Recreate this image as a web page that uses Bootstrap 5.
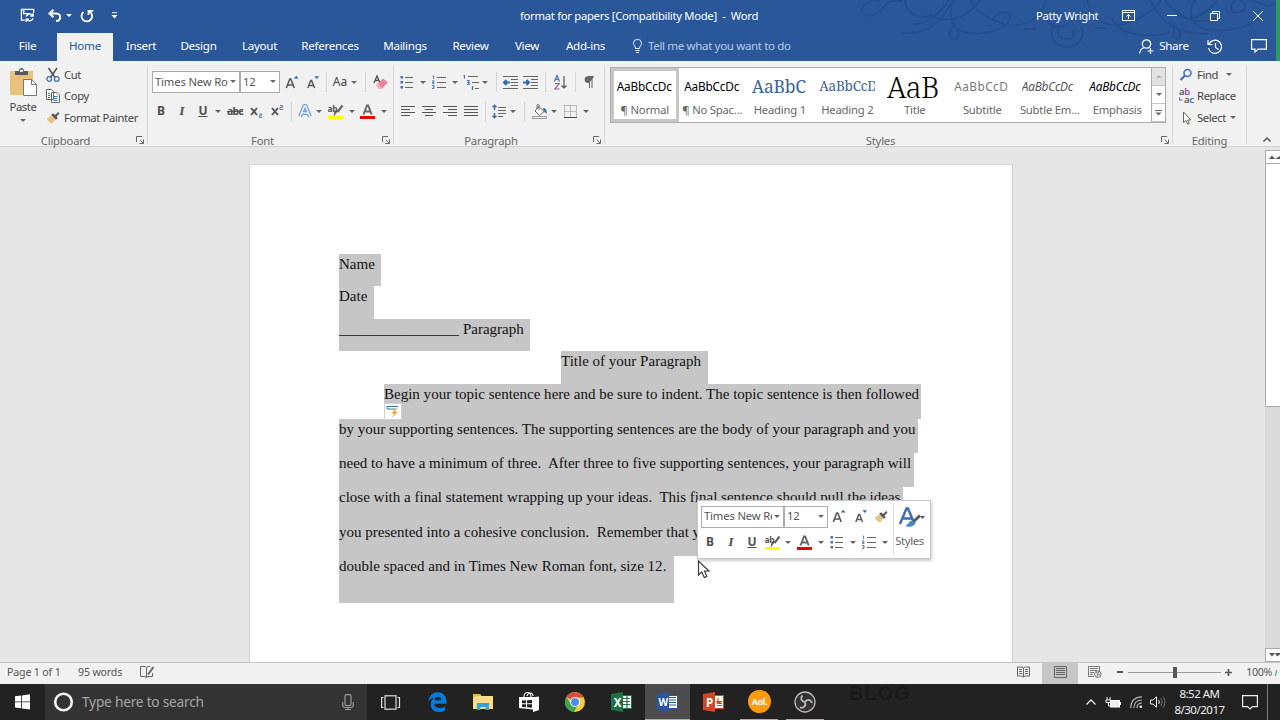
<!DOCTYPE html>
<html lang="en">
<head>
<meta charset="utf-8">
<title>format for papers [Compatibility Mode] - Word</title>
<meta name="viewport" content="width=device-width, initial-scale=1">
<link href="https://cdn.jsdelivr.net/npm/bootstrap@5.3.0/dist/css/bootstrap.min.css" rel="stylesheet">
<style>
:root{--wd-blue:#2a579a;--wd-gray:#f1f1f1;--wd-text:#444}
body{font-family:"Noto Sans","Open Sans",sans-serif;font-size:11.25px;letter-spacing:-.36px;line-height:16px;color:var(--wd-text);overflow:hidden;background:#e6e6e6}
svg{display:block;flex:none;overflow:visible}
.app{width:1280px;height:720px}
.head{height:61px;background:var(--wd-blue);border-right:4px solid #2b9e5f;color:#fff}
.swirl{left:850px;top:0}
.strip{display:grid;align-items:center;justify-items:center;white-space:nowrap}
.strip>.l{justify-self:start}
.title-row{height:31px;grid-template-columns:20px 15px 12px 15px 14px 21px 34px 389px 516px 71px 43px 44px 42px 44px;letter-spacing:-.28px}
.tab-row{height:30px;grid-template-columns:55px 2px 56px 56px 59px 63px 78px 72px 59px 54px 63px 13px 14px 4px 488px 21px 34px 41px 44px;font-size:11.6px;letter-spacing:-.28px}
.tab-row .on{background:var(--wd-gray);color:var(--wd-blue);height:28px;align-self:end;width:56px;text-align:center;padding-top:5px}
.tell{color:#b8cae6;letter-spacing:-.38px}
.ribbon{height:87px;background:var(--wd-gray);border-bottom:1px solid #d2d2d2}
.grp{border-right:1px solid #d8d8d8;margin-top:4px;height:79px}
.grp-clip{width:148px}.grp-font{width:246px}.grp-para{width:211px}.grp-style{width:568px}.grp-edit{width:74px}
.grp-name{height:15px;color:#666;margin-bottom:-4px;letter-spacing:-.2px}
.launch{right:3px;bottom:0}
.caret{width:0;height:0;border:3px solid transparent;border-top:3px solid #666;border-bottom:0}
.caret.light{border-top-color:#fff}
.caret.up{transform:rotate(180deg);opacity:.35}
.bar{width:1px;height:20px;background:#d5d5d5}
.combo{background:#fff;border:1px solid #ababab;height:22px;width:100%;display:flex;align-items:center;justify-content:space-between;padding:0 3px 1px 2px;letter-spacing:-.15px;color:#555}
.font1{height:34px;grid-template-columns:4px 88px 40px 24px 18px 8px 20px 8px 14px 16px}
.font2{height:24px;margin-left:3px;grid-template-columns:20px 22px 20px 10px 24px 18px 24px 4px 24px 4px 30px 2px 30px 2px}
.para1{height:34px;margin-left:3px;grid-template-columns:20px 12px 20px 12px 20px 8px 14px 14px 27px 2px 28px 2px 26px}
.para2{height:24px;margin-left:3px;grid-template-columns:21px 22px 20px 22px 6px 22px 6px 17px 13px 16px 16px 16px}
.b-ic{font-weight:700;font-size:12px;letter-spacing:0;color:#505050}
.b-it{font-family:"Liberation Serif",serif;font-size:13.5px;font-style:italic}
.b-st{font-size:10.5px;letter-spacing:-.8px;text-decoration:line-through}
.aa{font-size:12px;letter-spacing:0}
.paste{width:46px;padding-top:3px}
.paste span{margin-top:3px}
.clip-list{margin-top:-1px}
.clip-list>div,.edit-list>div{height:21.5px}
.gallery{margin:2px 0 0 5px;width:556px;height:56px;background:#fff;border:1px solid #ababab}
.sty{width:67.5px;height:54px;text-align:center;color:#666;padding:3px;letter-spacing:-.2px}
.sty.on{border:3px solid #c6c6c6;padding:0}
.sty .pv{width:56px;height:31px;margin:0 auto;overflow:hidden;white-space:nowrap;color:#000;display:flex;align-items:center;line-height:31px;font-size:11.8px}
.sty .nm{margin-top:0}
.sty .pv.h1s,.sty .pv.h2s{color:#3c6399;font-family:"Noto Serif","DejaVu Serif",serif;font-size:17.5px}
.sty .pv.h2s{font-size:13.5px}
.sty .pv.ts{font-family:"Noto Serif","DejaVu Serif",serif;font-weight:300;font-size:29px;letter-spacing:-.6px;align-items:flex-start;line-height:20px;height:25px;margin:6px auto 0}
.sty .pv.ss{color:#777;letter-spacing:.45px}
.sty .pv.se{color:#555;font-style:italic}
.sty .pv.em{font-style:italic}
.gal-sc{width:14px}
.gal-sc div{height:18px;border-left:1px solid #ababab;border-bottom:1px solid #c6c6c6;display:flex;align-items:center;justify-content:center}
.gal-sc .off{background:#e1e1e1}
.edit-list{margin:-1px 0 0 6px}
.edit-list span{margin-left:3px}
.collapse-ic{margin:0 -6px 1px 0}
.work{height:515px}
.page{width:764px;height:498px;margin:17px 0 0 249px;background:#fff;border:1px solid #d0d0d0;border-bottom:0;border-top-color:#d6d6d6;padding:89px 0 0 89px;font-family:"Liberation Serif",serif;font-size:15.02px;letter-spacing:0;color:#111;line-height:20px;white-space:pre}
.sel{background:#c6c6c6;display:block}
.scroller{width:15px;margin-top:3px}
.scroller .btn-b{height:14px;background:#fff;border:1px solid #ababab;border-right:0}
.scroller .thumb{height:243px;background:#fff;border:1px solid #ababab;border-right:0;border-top:0}
.scroller .trk{flex:1;background:#dadada}
.mini{left:697px;top:500px;width:234px;height:59px;background:#fff;border:1px solid #c6c6c6;box-shadow:1px 2px 3px #0003}
.mini1{height:31px;grid-template-columns:3px 83px 44px 22px 22px 17px}
.mini1 .fname{width:68px;overflow:hidden}
.mini2{height:20px;grid-template-columns:2px 20px 22px 20px 22px 8px 26px 5px 27px 5px 27px 5px}
.mini-s{left:195px;top:2px;width:34px;height:52px;border-left:1px solid #ddd}
.mini-s svg{margin:3px 0 0 2px}
.mini-s span{margin:3px 2px 0 0;color:#666}
.tag{left:384px;top:403px;width:18px;height:17px;background:#fff;border:1px solid #d0d0d0}
.ptr{left:697px;top:560px}
.status{height:22px;background:var(--wd-gray);border-top:1px solid #c6c6c6;grid-template-columns:7px 71px 62px 15px 849px 38px 36px 34px 16px 93px 14px 45px;letter-spacing:-.15px;font-size:10.6px;color:#555}
.status>span,.status>svg{margin-top:-3px}
.status .on{background:#c6c6c6;width:36px;height:21px;display:flex;align-items:center;justify-content:center;padding-bottom:3px}
.zoom-pc{padding-left:8px;letter-spacing:-.3px}
.zoom-pc i{color:#2b9e5f}
.task{height:36px;background:#222;color:#eee}
.start{width:45px}
.find-box{width:322px;background:#333;color:#a6a6a6;font-size:13.7px;letter-spacing:-.22px}
.find-box span{margin-left:9px}
.find-box .mic{margin:0 13px 0 auto}
.apps{grid-template-columns:46px 46px 46px 46px 46px 46px 46px 46px 46px 46px;height:36px;margin-left:1px}
.apps>div{height:36px;width:45px;display:flex;align-items:center;justify-content:center}
.apps .act{background:#4c4c4c}
.apps .run{border-bottom:1px solid #d99aa3}
.apps .nrw{width:38px}
.ghost{left:849px;top:681px;height:19px;padding-top:3px;overflow:hidden;color:#1a1a1a;font:700 20px/19px "Liberation Sans",sans-serif;letter-spacing:1px;clip-path:inset(3px 0 0 0)}
.tray{grid-template-columns:22px 22px 24px 19px 65px 35px 15px;height:36px;font-size:11.5px;letter-spacing:-.5px;line-height:16px;margin-right:-2px}
.tray .edge-ln{width:1px;height:36px;background:#777;justify-self:start}
</style>
</head>
<body>
<svg width="0" height="0" class="position-absolute">
<defs>
<symbol id="bul" viewBox="0 0 14 14"><path d="M5 2.500h8M5 7.500h8M5 12.500h8" stroke="#666"/><path d="M.5 1h2.500v2.500h-2.500zM.5 6h2.500v2.500h-2.500zM.5 11h2.500v2.500h-2.500z" fill="#4472b4"/></symbol>
<symbol id="num" viewBox="0 0 14 14"><path d="M5 2.500h9M5 7.500h9M5 12.500h9" stroke="#666"/><path d="M.6 1h1v3M0 5.900h2v1.400H.6v1.300h1.800M0 10.500h2v3H0M.8 12h1" fill="none" stroke="#4472b4" stroke-width=".9"/></symbol>
<symbol id="grow" viewBox="0 0 14 15"><path d="M1.300 13 4.800 4h1L9.300 13M2.700 10h5.200" fill="none" stroke="#5a5a5a" stroke-width="1.600"/><path d="M8.800 3.500 11.200.8l2.300 2.700z" fill="#2a6ab0"/></symbol>
<symbol id="shrink" viewBox="0 0 14 15"><path d="M1.800 13 4.800 5.500h.8L8.600 13M3 10.500h4.500" fill="none" stroke="#5a5a5a" stroke-width="1.500"/><path d="M8.500 1.200h4.600L10.800 4z" fill="#2a6ab0"/></symbol>
<symbol id="hilite" viewBox="0 0 16 15"><rect y="12" width="15" height="3" fill="#ff0"/><path d="M14.500 1.500 9.500 8" stroke="#666" stroke-width="2.200"/><path d="M9.500 7 6 11.500l1.300-4.500z" fill="#555" stroke="#555" stroke-width=".8"/><text x="-.5" y="7.500" font-size="8.500" font-weight="700" fill="#555" letter-spacing="-.4">ab</text></symbol>
<symbol id="fcol" viewBox="0 0 16 15"><rect y="12" width="15" height="3" fill="#e80000"/><path d="M3.500 10.500 7 1.500h1.200l3.500 9M4.800 7.500h5.500" fill="none" stroke="#666" stroke-width="1.900"/></symbol>
<symbol id="brush" viewBox="0 0 14 14"><path d="m.5 8 5-3.500L9.500 9 6 13.500C4 13.200 1.500 11 .5 8z" fill="#e8c183"/><path d="m5 4 2-1.500 2.300 1.800L12.500 1 14 2.500l-3 3.300 1 2.200L10 9.500z" fill="#58595b"/></symbol>
<symbol id="launchi" viewBox="0 0 8 8"><path d="M.5 6V.5H6M4 4l3 3M7.500 3.500v4h-4" fill="none" stroke="#666"/></symbol>
</defs></svg>

<div class="app d-flex flex-column position-relative">
<header class="head position-relative">
<svg class="swirl position-absolute" width="426" height="61" viewBox="0 0 426 61" fill="none" stroke="#254e8e" stroke-width="1.800"><path d="M30 2c-6-4-18 1-18 8 0 8 14 7 20-1S42 0 52 1M55 0c0 12 14 22 28 14M52 33c28 2 40-12 52-34M62 24c12 2 26-8 38-25M104 0c-8 18 0 32 15 33 20 2 41-5 41-16 0-8-12-5-16 1M106 24c-6 2-9 14-2 15s5-9 0-13M82 15c18 12 40-2 48-15M120 0c8 14 18 18 34 24 16 5 36-2 42-24M196 15c0 10 10 15 20 10M203 27c-5 10 4 20 14 20s19-9 14-20M209 29c-3 7 2 10 8 10s9-4 5-8M237 0c4 22 24 30 44 22 14-6 24-12 30-22M245 28h12M174 29h12M262 18c4 16 38 22 58 14M300 0c10 20 22 34 58 34M315 0c8 12 30 28 52 18M330 15c12 10 28-4 38-15M326 27c-6 8 0 14 3 11s1-9-3-11M345 0c-9 14-2 28 14 30 18 2 46-3 50-15M385 0c-8 8-2 15 5 12s7-10 0-11M400 0c12 2 18 10 24 3"/></svg>
<div class="strip title-row position-relative">
<span></span>
<svg width="16" height="15" viewBox="0 0 17 16" fill="none" stroke="#fff" stroke-width="1.400"><path d="M5 13H1.500V1.500h13V5M4 1.500V6h6.500"/><path d="M6.500 9a4 4 0 0 1 7-1M14 5.500v3h-3M14 11a4 4 0 0 1-7 1M6.500 15v-3h3"/></svg>
<span></span>
<svg width="14" height="13" viewBox="0 0 14 13" fill="none" stroke="#fff" stroke-width="2"><path d="M5.500.8 1.500 4.500l4 3.700M2 4.500h6.500c5 0 5 7.500-.5 7.500"/></svg>
<i class="caret light"></i>
<svg width="14" height="14" viewBox="0 0 14 14" fill="none" stroke="#fff" stroke-width="1.800"><path d="M9.500 2.600A5.300 5.300 0 1 1 3.500 3M8.500 6V1.800h4.800" /></svg>
<svg width="7" height="7" viewBox="0 0 7 7"><path d="M1 .7h5" stroke="#fff"/><path d="M.5 3h6l-3 3.500z" fill="#fff"/></svg>
<span></span>
<span class="l">format for papers [Compatibility Mode] &nbsp;-&nbsp; Word</span>
<span class="l">Patty Wright</span>
<svg width="13" height="11" viewBox="0 0 13 11" fill="none" stroke="#fff"><path d="M.5.5h12v10H.5zM.5 2.500h12M6.500 9V4.500M4.500 6.500l2-2 2 2"/></svg>
<svg width="10" height="10" viewBox="0 0 10 10" stroke="#fff"><path d="M0 4.500h10"/></svg>
<svg width="10" height="10" viewBox="0 0 10 10" fill="none" stroke="#fff"><path d="M.5 2.500h7v7h-7zM2.500 2.500v-2h7v7h-2"/></svg>
<svg width="10" height="10" viewBox="0 0 10 10" stroke="#fff"><path d="m0 0 10 10M10 0 0 10"/></svg>
</div>
<nav class="strip tab-row position-relative">
<span>File</span><span></span><span class="on">Home</span><span>Insert</span><span>Design</span><span>Layout</span><span>References</span><span>Mailings</span><span>Review</span><span>View</span><span>Add-ins</span><span></span>
<svg width="9" height="14" viewBox="0 0 9 14" fill="none" stroke="#e8eef7"><path d="M2.500 9.500C2.500 7 .5 6.500.5 4.300a4 4 0 0 1 8 0C8.500 6.500 6.500 7 6.500 9.500zM2.500 11.500h4M3 13.500h3"/></svg>
<span></span><span class="l tell">Tell me what you want to do</span>
<svg width="15" height="15" viewBox="0 0 15 15" fill="none" stroke="#fff" stroke-width="1.200"><circle cx="7.500" cy="5" r="4.200"/><path d="M.6 14.500C1 11 3 9.300 5 8.700M9.500 8.500l1 .5M8.500 12h6M11.500 9v6"/></svg>
<span>Share</span>
<svg width="16" height="15" viewBox="0 0 16 15" fill="none" stroke="#fff" stroke-width="1.200" style="margin-left:6px"><path d="M2 5a6.600 6.600 0 1 1-.5 4M1 1v4.500h4.500M8.500 4v4.500l3 2"/></svg>
<svg width="16" height="14" viewBox="0 0 16 14" fill="none" stroke="#fff" stroke-width="1.200" style="margin-left:9px"><path d="M.6.600h14.800v9.500H7l-3 3v-3H.6z"/></svg>
</nav>
</header>

<section class="ribbon d-flex">
<div class="grp grp-clip position-relative d-flex flex-column justify-content-between">
<div class="d-flex">
<div class="paste d-flex flex-column align-items-center"><svg width="27" height="28" viewBox="0 0 27 28"><rect y="3" width="23" height="24" rx="1" fill="#e8c27a"/><path d="M5 3h4c0-4 5-4 5 0h4v4H5z" fill="#58595b"/><rect x="10" y="1.800" width="3" height="2" fill="#fff"/><path d="M13.500 11.500h8l5 5v11h-13z" fill="#fff" stroke="#777"/><path d="M21.500 11.500v5h5" fill="none" stroke="#777"/></svg><span>Paste</span><i class="caret mt-1"></i></div>
<div class="clip-list">
<div class="d-flex align-items-center"><svg width="14" height="14" viewBox="0 0 14 14" fill="none"><path d="M2.500 0 9 9.500M11 0 4.500 9.500" stroke="#555" stroke-width="1.500"/><circle cx="3.200" cy="11" r="2.300" stroke="#3f70ad" stroke-width="1.300"/><circle cx="10.700" cy="11" r="2.300" stroke="#3f70ad" stroke-width="1.300"/></svg><span class="ms-1">Cut</span></div>
<div class="d-flex align-items-center"><svg width="14" height="14" viewBox="0 0 14 14" fill="#fff" stroke="#666"><path d="M.5.5h5l2 2v8h-7zM5.500 3.500H11l2.500 2.500v7.500h-8z"/><path d="M2 4.500h2M2 6.500h2M2 8.500h2M7.500 7.500h4M7.500 9.500h4M7.500 11.500h4" stroke="#3f70ad"/></svg><span class="ms-1">Copy</span></div>
<div class="d-flex align-items-center"><svg width="14" height="13"><use href="#brush"/></svg><span class="ms-1">Format Painter</span></div>
</div></div>
<div class="grp-name text-center pe-3">Clipboard</div>
<svg class="launch position-absolute" width="8" height="8"><use href="#launchi"/></svg>
</div>

<div class="grp grp-font position-relative d-flex flex-column">
<div class="strip font1"><span></span><div class="combo"><span>Times New Ro</span><i class="caret"></i></div><div class="combo"><span>12</span><i class="caret"></i></div>
<svg width="14" height="15"><use href="#grow"/></svg><svg width="14" height="15"><use href="#shrink"/></svg><i class="bar"></i><span class="aa">Aa</span><i class="caret"></i><i class="bar"></i>
<svg width="15" height="15" viewBox="0 0 15 15"><path d="M1 8 4 1l3 7M2 5.500h4" fill="none" stroke="#555" stroke-width="1.400"/><path d="m3 10 7-6.500 5 4L8.500 14H6z" fill="#e8829a"/><path d="m3 10 2-2 4 5-1 1H6z" fill="#f3b3c1"/></svg></div>
<div class="strip font2"><span class="b-ic">B</span><span class="b-ic b-it">I</span><span class="b-ic text-decoration-underline">U</span><i class="caret"></i><span class="b-ic b-st">abc</span>
<svg width="13" height="13" viewBox="0 0 13 13"><path d="m1 3 6 7M7 3l-6 7" stroke="#555" stroke-width="1.900"/><path d="M9.500 9h2v1.500h-2V12.500H12" fill="none" stroke="#3f87c4"/></svg>
<svg width="13" height="13" viewBox="0 0 13 13"><path d="m1 3 6 7M7 3l-6 7" stroke="#555" stroke-width="1.900"/><path d="M9 .5h2.500V2.500H9V4.500h3" fill="none" stroke="#3f87c4"/></svg>
<i class="bar"></i>
<svg width="14" height="14" viewBox="0 0 14 14" fill="none"><path d="M2 12.500 6.500 2h1L12 12.500M4 9h6" stroke="#6f9fd6" stroke-width="4" stroke-linejoin="round"/><path d="M2 12.500 6.500 2h1L12 12.500M4 9h6" stroke="#eaf2fb" stroke-width="1.600"/></svg><i class="caret"></i>
<svg width="16" height="15"><use href="#hilite"/></svg><i class="caret"></i><svg width="16" height="15"><use href="#fcol"/></svg><i class="caret"></i></div>
<div class="grp-name text-center mt-auto pe-3">Font</div>
<svg class="launch position-absolute" width="8" height="8"><use href="#launchi"/></svg>
</div>

<div class="grp grp-para position-relative d-flex flex-column">
<div class="strip para1"><svg width="14" height="14"><use href="#bul"/></svg><i class="caret"></i><svg width="14" height="14"><use href="#num"/></svg><i class="caret"></i>
<svg width="17" height="15" viewBox="0 0 17 15"><path d="M5 1.500h10M9 7.500h7M12 13.500h4" stroke="#666"/><path d="M.5.500h1v3M4 5.500h2v2H4M4 9.500h2v-2M9.500 11v4" stroke="#4472b4" fill="none" stroke-width="1.200"/></svg><i class="caret"></i><i class="bar"></i>
<svg width="15" height="13" viewBox="0 0 15 13"><path d="M0 .5h15M8 3.500h7M8 6.500h7M8 9.500h7M0 12.500h15" stroke="#666"/><path d="M1 6.500h6M3.500 4 1 6.500 3.500 9" fill="none" stroke="#2f69b3" stroke-width="2"/></svg>
<svg width="15" height="13" viewBox="0 0 15 13"><path d="M0 .5h15M8 3.500h7M8 6.500h7M8 9.500h7M0 12.500h15" stroke="#666"/><path d="M0 6.500h6M3.500 4 6 6.500 3.500 9" fill="none" stroke="#2f69b3" stroke-width="2"/></svg>
<i class="bar"></i>
<svg width="13" height="15" viewBox="0 0 13 15" fill="none"><path d="M.5 6.500 3 .5l2.500 6M1.500 4.500h3" stroke="#3f70b4" stroke-width="1.200"/><path d="M.8 8.500h4.400l-4.400 5.500h4.700" stroke="#9254ae" stroke-width="1.200"/><path d="M10 1v12M7.500 10.500 10 13l2.500-2.500" stroke="#555" stroke-width="1.200"/></svg><i class="bar"></i>
<svg width="10" height="12" viewBox="0 0 10 12"><path d="M9.500.6H4a3 3 0 0 0 0 6h1zM5.500.5V12M8 .5V12" fill="#666" stroke="#666"/></svg></div>
<div class="strip para2"><svg width="14" height="12" stroke="#555"><path d="M0 1.500h14M0 4.500h9M0 7.500h14M0 10.500h9"/></svg><svg width="14" height="12" stroke="#555"><path d="M0 1.500h14M3 4.500h8M0 7.500h14M3 10.500h8"/></svg><svg width="14" height="12" stroke="#555"><path d="M0 1.500h14M5 4.500h9M0 7.500h14M5 10.500h9"/></svg><svg width="14" height="12" stroke="#555"><path d="M0 1.500h14M0 4.500h14M0 7.500h14M0 10.500h14"/></svg><i class="bar"></i>
<svg width="14" height="15" viewBox="0 0 14 15"><path d="M6 3.500h8M6 6.500h8M6 9.500h8M6 12.500h5" stroke="#666"/><path d="M2.500 1v5M.5 3.200l2-2 2 2M2.500 9v5M.5 11.800l2 2 2-2" fill="none" stroke="#3f70b4" stroke-width="1.500"/></svg><i class="caret"></i><i class="bar"></i>
<svg width="16" height="15" viewBox="0 0 16 15"><path d="m7 2.500 5 5-4.500 4L3 7z" fill="#fff" stroke="#666"/><path d="M7 6V1.500c0-1.500-2-1.500-2 0V5" fill="none" stroke="#666"/><path d="M11 4c3 0 4 2 3.500 6L11.500 7z" fill="#3f70b4"/><path d="M.5 12.500h14v2H.5z" fill="#fff" stroke="#999"/></svg><i class="caret"></i>
<svg width="13" height="13" viewBox="0 0 13 13" stroke="#888" fill="none"><path d="M.5.500h12M.5 6.500h12M.5.500v12M6.500.5v12M12.500.500v12" stroke-dasharray="1 1"/><path d="M0 12.500h13" stroke="#444"/></svg><i class="caret"></i></div>
<div class="grp-name text-center mt-auto pe-3">Paragraph</div>
<svg class="launch position-absolute" width="8" height="8"><use href="#launchi"/></svg>
</div>

<div class="grp grp-style position-relative d-flex flex-column">
<div class="gallery d-flex">
<div class="sty on"><div class="pv">AaBbCcDc</div><div class="nm">¶ Normal</div></div>
<div class="sty"><div class="pv">AaBbCcDc</div><div class="nm">¶ No Spac...</div></div>
<div class="sty"><div class="pv h1s">AaBbC</div><div class="nm">Heading 1</div></div>
<div class="sty"><div class="pv h2s">AaBbCcD</div><div class="nm">Heading 2</div></div>
<div class="sty"><div class="pv ts">AaB</div><div class="nm">Title</div></div>
<div class="sty"><div class="pv ss">AaBbCcD</div><div class="nm">Subtitle</div></div>
<div class="sty"><div class="pv se">AaBbCcDc</div><div class="nm">Subtle Em...</div></div>
<div class="sty"><div class="pv em">AaBbCcDc</div><div class="nm">Emphasis</div></div>
<div class="gal-sc"><div class="off"><i class="caret up"></i></div><div><i class="caret"></i></div><div><svg width="7" height="6" viewBox="0 0 7 6"><path d="M0 .5h7" stroke="#666"/><path d="M.5 2.500h6l-3 3z" fill="#666"/></svg></div></div>
</div>
<div class="grp-name text-center mt-auto pe-3">Styles</div>
<svg class="launch position-absolute" width="8" height="8"><use href="#launchi"/></svg>
</div>

<div class="grp grp-edit d-flex flex-column">
<div class="edit-list">
<div class="d-flex align-items-center"><svg width="15" height="12" viewBox="0 0 15 12" fill="none" stroke="#3f70b4"><circle cx="8.500" cy="4" r="3.500" stroke-width="1.500"/><path d="M6 6.500 1.500 11" stroke-width="2.200"/></svg><span>Find</span><i class="caret ms-2"></i></div>
<div class="d-flex align-items-center"><svg width="15" height="14" viewBox="0 0 15 14" font-size="9.500" font-weight="600" letter-spacing="-.3"><text x="0" y="6" fill="#555">a<tspan fill="#9254ae">b</tspan></text><text x="5" y="14" fill="#555">a<tspan fill="#3f70b4">c</tspan></text><path d="M.5 8.500v2.500h3" fill="none" stroke="#3f70b4"/></svg><span>Replace</span></div>
<div class="d-flex align-items-center"><svg width="15" height="14" viewBox="0 0 15 14"><path d="M4.500 1v10.500l2.500-2 1.800 3.800 1.500-.8L8.600 9h3.200z" fill="#fff" stroke="#666"/></svg><span>Select</span><i class="caret ms-1"></i></div>
</div>
<div class="grp-name text-center mt-auto">Editing</div></div>
<div class="flex-fill d-flex align-items-end justify-content-center"><svg class="collapse-ic" width="8" height="8" fill="none" stroke="#555" stroke-width="1.500"><path d="m.5 4.500 3.500-3.500 3.500 3.500"/></svg></div>
</section>

<main class="work d-flex justify-content-between">
<div class="page flex-shrink-0"><div class="sel" style="width:42px;height:32px">Name</div><div class="sel" style="width:35px;height:33px">Date</div><div class="sel" style="width:191px;height:32px">________________ Paragraph</div><div class="sel" style="width:147px;height:33px;margin-left:222px">Title of your Paragraph</div><div class="sel" style="width:537px;height:35px;margin-left:45px">Begin your topic sentence here and be sure to indent. The topic sentence is then followed</div><div class="sel" style="width:579px;height:34px">by your supporting sentences. The supporting sentences are the body of your paragraph and you</div><div class="sel" style="width:575px;height:34px">need to have a minimum of three.  After three to five supporting sentences, your paragraph will</div><div class="sel" style="width:564px;height:35px">close with a final statement wrapping up your ideas.  This final sentence should pull the ideas</div><div class="sel" style="width:564px;height:34px">you presented into a cohesive conclusion.  Remember that y</div><div class="sel" style="width:335px;height:47px">double spaced and in Times New Roman font, size 12.</div></div>
<div class="scroller d-flex flex-column"><div class="btn-b"><svg width="14" height="12"><path d="M3 8h6L6 4.500zM9 8h5V5z" fill="#555"/></svg></div><div class="thumb"></div><div class="trk"></div><div class="btn-b"><svg width="14" height="12"><path d="M3 4h6L6 7.500zM9 4h5v1.500L11 7.500z" fill="#555"/></svg></div></div>
</main>

<footer class="status strip"><span></span><span class="l">Page 1 of 1</span><span class="l">95 words</span>
<svg width="15" height="12" viewBox="0 0 15 12" fill="none" stroke="#666"><path d="M6.500 1.500 5 .5H.5v10H5l1.500 1 1.500-1h4.500V7M6.500 1.500v10M6.500 1.500 8 .5h2"/><path d="M8 8.500 13.500 1" stroke-width="2"/></svg><span></span>
<svg width="13" height="12" viewBox="0 0 13 12" fill="none" stroke="#666"><path d="M.5 1h4.500l1.500 1L8 1h4.500v9H8l-1.500 1L5 10H.5zM6.500 2v9M2 3.500h3M2 5.500h3M2 7.500h3M8 3.500h3M8 5.500h3M8 7.500h3"/></svg>
<div class="on"><svg width="13" height="12" viewBox="0 0 13 12" fill="none" stroke="#666"><path d="M.5.5h12v11H.5zM2 2.500h9M2 4.500h9M2 6.500h9M2 8.500h9"/></svg></div>
<svg width="14" height="12" viewBox="0 0 14 12" fill="none" stroke="#777"><path d="M6 10.500H.5V.5h11V5M2 2.500h8M2 4.500h7M2 6.500h4M2 8.500h3"/><circle cx="9.800" cy="8.200" r="3.300" fill="#eee"/><path d="M8 6.500l2 1 1-2M9 11l1-3 2.500 1"/></svg>
<svg width="6" height="2"><path d="M0 1h6" stroke="#555" stroke-width="2"/></svg>
<svg width="93" height="11"><path d="M0 5.500h93" stroke="#999"/><rect x="45" width="4" height="11" fill="#555"/></svg>
<svg width="7" height="7" stroke="#555" stroke-width="1.700"><path d="M0 3.500h7M3.500 0v7"/></svg>
<span class="zoom-pc">100% <i>ı</i></span></footer>

<div class="task d-flex align-items-center">
<div class="start d-flex justify-content-center"><svg width="15" height="16" viewBox="0 0 15 16" fill="#fff"><path d="M0 2.300 6.200 1.500v6H0zM7 1.400 15 .3v7.200H7zM0 8.300h6.200v6L0 13.500zM7 8.300h8v7.300L7 14.500z"/></svg></div>
<div class="find-box h-100 d-flex align-items-center"><svg width="20" height="20" class="ms-2" viewBox="0 0 20 20"><circle cx="10.500" cy="10" r="8.300" fill="none" stroke="#f4f4f4" stroke-width="2.600"/></svg><span>Type here to search</span><svg class="mic" width="12" height="16" viewBox="0 0 12 16" fill="none" stroke="#999" stroke-width="1.200"><rect x="3" y=".6" width="6" height="11" rx="1.500"/><path d="M.8 8v3.500c0 2 1.500 2 5.200 2s5.200 0 5.200-2V8M6 13.500v2M3 15.500h6"/></svg></div>
<div class="strip apps">
<div><svg width="20" height="15" viewBox="0 0 20 15" fill="none" stroke="#ddd" stroke-width="1.200"><rect x="4" y=".8" width="11" height="13.400"/><path d="M2.500 2.500H.6v10h1.900M16.500 2.500h2v10h-2"/></svg></div>
<div><svg width="19" height="20" viewBox="0 0 19 20" fill="#0a7ad8"><path d="M.3 9.500C1 3.500 5 .3 9.800.3c5.500 0 8.700 4 8.700 9.200v2.200H6.300c.2 3 2.400 4.300 5.500 4.300 2 0 3.800-.5 5.400-1.500v4C15.500 19.400 13.300 20 10.800 20c-5 0-8-3-8-7.500 0-3 1.500-5.500 4-6.900C4 6 1.800 7.300.3 9.500zM6.500 8.300h6.800c0-2.200-1.200-3.400-3.200-3.400-1.900 0-3.300 1.200-3.600 3.400z"/></svg></div>
<div><svg width="20" height="18" viewBox="0 0 20 18"><path d="M0 1h7l1.500 2H20v13H0z" fill="#f7dd88"/><path d="M0 1h7l1 1.800L0 4z" fill="#e2b84c"/><path d="M4 17v-7h12v7h-3.500v-3h-5v3z" fill="#35a3dd"/></svg></div>
<div><svg width="20" height="22" viewBox="0 0 20 22"><path d="M0 6h14v12.500L0 17zM14 6h2l4-.5V19l-6 2z" fill="#fff"/><path d="M5 6c0-6 7-6 7 0M8 5c1-4 6-4 6 0" fill="none" stroke="#eee" stroke-width="1.200"/><path d="M3 9.500 7 9.300v3H3zM8 9.200 13 9v3.300H8zM3 13.200h4v3l-4-.2zM8 13.200h5v3.500L8 16.300z" fill="#222"/></svg></div>
<div><svg width="20" height="20" viewBox="0 0 20 20"><circle cx="10" cy="10" r="10" fill="#f7cc3f"/><path d="M10 10 1.300 5A10 10 0 0 1 18.700 5.500H10z" fill="#db4b3e"/><path d="M1.300 5A10 10 0 0 0 9 20l4.500-8L6 12z" fill="#3aa757"/><circle cx="10" cy="10" r="5" fill="#fff"/><circle cx="10" cy="10" r="4" fill="#4b8df5"/></svg></div>
<div><svg width="21" height="20" viewBox="0 0 21 20"><path d="M11 3.500h9.500v13H11z" fill="#fff" stroke="#1e7145"/><path d="M12 6.500h7M12 9.500h7M12 12.500h7M16 4v12" stroke="#1e7145" stroke-width="1.200"/><path d="M0 2 12 0v20L0 18z" fill="#1e7145"/><text x="2.700" y="14.500" font-size="11.500" font-weight="700" fill="#fff">X</text></svg></div>
<div class="act run"><svg width="21" height="20" viewBox="0 0 21 20"><path d="M11 3.500h9.500v13H11z" fill="#fff" stroke="#2a579a"/><path d="M12 5.500h7M12 8h7M12 10.500h7M12 13h7" stroke="#2a579a"/><path d="M0 2 12 0v20L0 18z" fill="#2a579a"/><text x="1.500" y="14" font-size="10" font-weight="700" fill="#fff">W</text></svg></div>
<div><svg width="21" height="20" viewBox="0 0 21 20"><path d="M11 3.500h9.500v13H11z" fill="#fff" stroke="#d04727"/><path d="M14 11.500h5M14 13.500h5" stroke="#d04727"/><path d="M15 6v3.500h3A3 3 0 0 1 13 9" fill="none" stroke="#d04727" stroke-width="1.200"/><path d="M0 2 12 0v20L0 18z" fill="#d04727"/><text x="3" y="14.500" font-size="11.500" font-weight="700" fill="#fff">P</text></svg></div>
<div class="run nrw"><svg width="23" height="23" viewBox="0 0 23 23"><circle cx="11.500" cy="11.500" r="11.500" fill="#ff9b0b"/><text x="11.500" y="14.800" text-anchor="middle" font-size="9" font-weight="700" fill="#fff">Aol.</text></svg></div>
<div class="run nrw"><svg width="22" height="22" viewBox="0 0 22 22" fill="none" stroke="#bbb" stroke-width="1.300"><circle cx="11" cy="11" r="10" fill="#333"/><path d="M11 11C7 10.500 6 7 8.500 4.500M11 11c2-3.500 6-2.500 7 1M11 11c1.500 4-1.500 6.500-5 5.500" stroke-width="1.800"/></svg></div>
</div>
<div class="strip tray ms-auto"><svg width="10" height="6" viewBox="0 0 10 6" fill="none" stroke="#eee" stroke-width="1.300"><path d="m.5 5.500 4.500-4.500 4.500 4.500"/></svg>
<svg width="15" height="11" viewBox="0 0 15 11"><rect x="4.500" y="3.500" width="9" height="6.500" fill="#eee" stroke="#fff"/><path d="M14.500 5v3M1 0v3M4 0v3M0 3h5v2.500H0zM2.500 5v4h2" stroke="#eee" fill="none"/></svg>
<svg width="13" height="12" viewBox="0 0 13 12" fill="none" stroke="#bbb" stroke-width="1.200"><path d="M.8 12C.8 5 5 .8 12 .8M4 12c0-5 3-8 8-8M7 12c0-3 2-5 5-5"/><circle cx="10.800" cy="10.800" r="1.200" fill="#fff" stroke="none"/></svg>
<svg width="16" height="12" viewBox="0 0 16 12" fill="none" stroke="#eee"><path d="M.5 4h2.500L6.500.8v10.400L3 8H.5z"/><path d="M8.500 4c1 1 1 3 0 4" /><path d="M10.500 2c2 2 2 6 0 8M13 .5c2.500 3 2.500 8 0 11" stroke="#777"/></svg>
<div class="text-center">8:52 AM<br>8/30/2017</div>
<svg width="16" height="15" viewBox="0 0 16 15" fill="none" stroke="#eee" stroke-width="1.200"><path d="M.6.600h14.800v11H10.500L8 14l-2.500-2.400H.6z"/></svg>
<i class="edge-ln"></i></div>
</div>
<div class="ghost position-absolute" aria-hidden="true">BLOG</div>

<div class="tag position-absolute"><svg width="16" height="15" viewBox="0 0 16 15"><path d="M2 2.500h11M2 2v3h8" fill="none" stroke="#3f7599"/><path d="M11 4 6.500 9.500h2.500L7 14l5.500-6H10l2-4z" fill="#eca33c"/></svg></div>

<div class="mini position-absolute">
<div class="strip mini1"><span></span><div class="combo"><span class="fname">Times New Ro</span><i class="caret"></i></div><div class="combo"><span>12</span><i class="caret"></i></div><svg width="14" height="15"><use href="#grow"/></svg><svg width="14" height="15"><use href="#shrink"/></svg><svg width="14" height="13"><use href="#brush"/></svg></div>
<div class="strip mini2"><span></span><span class="b-ic">B</span><span class="b-ic b-it">I</span><span class="b-ic text-decoration-underline">U</span><svg width="16" height="15"><use href="#hilite"/></svg><i class="caret"></i><svg width="16" height="15"><use href="#fcol"/></svg><i class="caret"></i><svg width="14" height="14"><use href="#bul"/></svg><i class="caret"></i><svg width="14" height="14"><use href="#num"/></svg><i class="caret"></i></div>
<div class="mini-s position-absolute d-flex flex-column align-items-center"><svg width="28" height="24" viewBox="0 0 28 24"><path d="M2 18 8.500 2.500h1.500L16.500 18M4.500 12.500h9.500" fill="none" stroke="#3f70b4" stroke-width="2.500"/><path d="M22 9.500 14 17" stroke="#58595b" stroke-width="3"/><path d="M15 15c-4-1-4 4-8 5 4 2 10 0 10-3z" fill="#3f87c4"/><path d="M22 10h5l-2.500 3z" fill="#555"/></svg><span>Styles</span></div>
</div>
<svg class="ptr position-absolute" width="13" height="19" viewBox="0 0 13 19"><path d="M1.500 1v14l3.300-3 2.500 5.500 2.500-1L7.500 11H12z" fill="#fff" stroke="#333" stroke-width="1.100"/></svg>
</div>
<script src="https://cdn.jsdelivr.net/npm/bootstrap@5.3.0/dist/js/bootstrap.bundle.min.js"></script>
</body>
</html>
